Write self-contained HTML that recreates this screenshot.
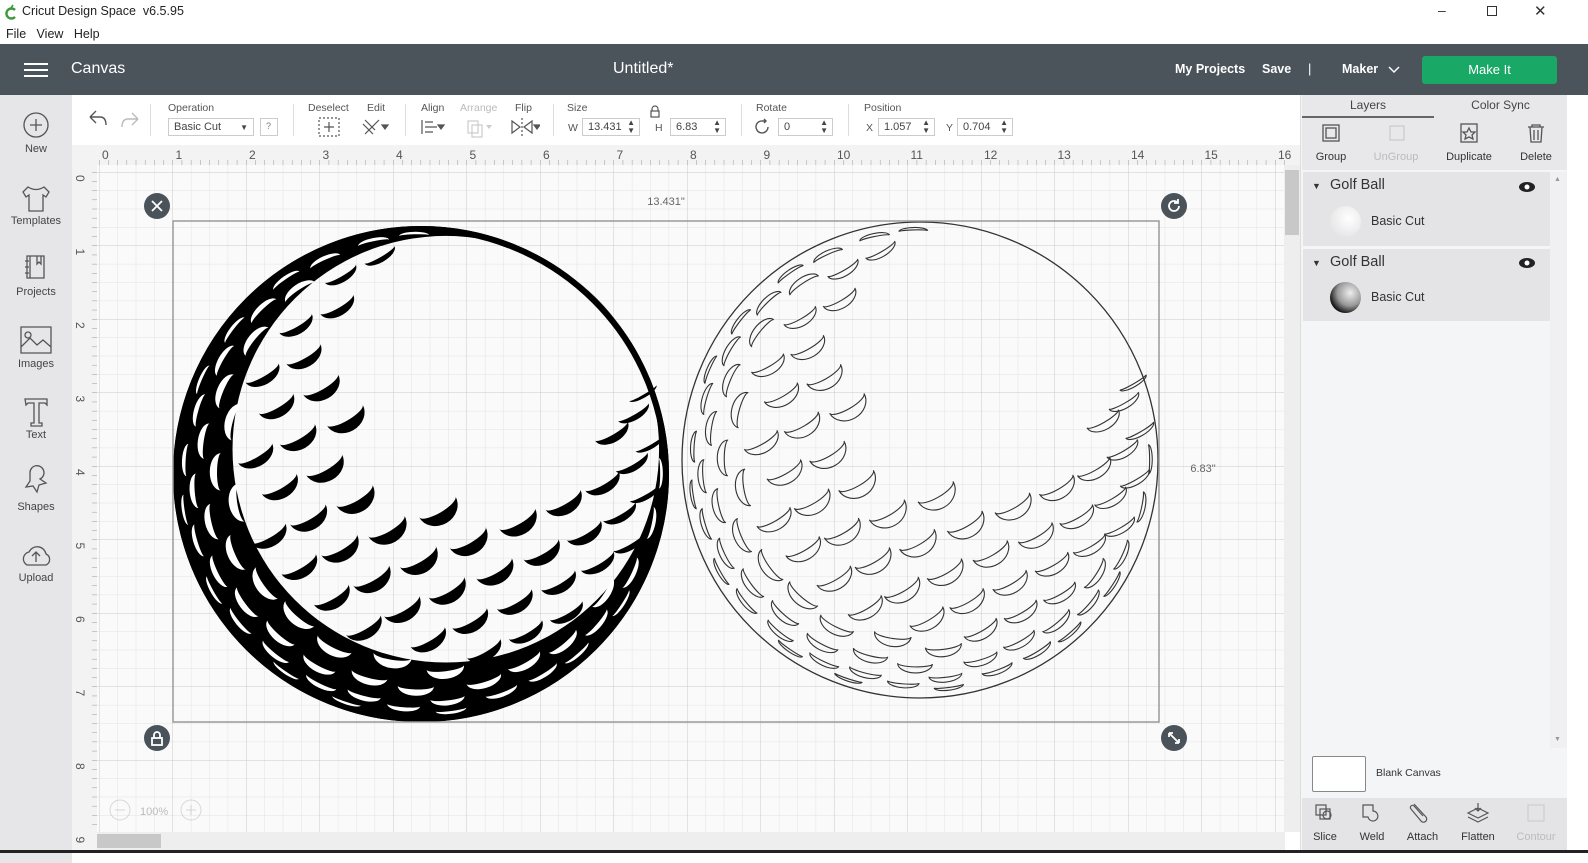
<!DOCTYPE html>
<html><head><meta charset="utf-8">
<style>
*{margin:0;padding:0;box-sizing:border-box}
body{width:1588px;height:863px;overflow:hidden;background:#fff;font-family:"Liberation Sans",sans-serif;position:relative;color:#333}
.a{position:absolute}
.lbl{font-size:10.5px;color:#555;position:absolute}
.inp{position:absolute;border:1px solid #ccc;height:18px;font-size:11px;color:#444;padding:2px 5px;background:#fff}
.sep{position:absolute;top:104px;width:1px;height:32px;background:#ddd}
.side{position:absolute;left:0;width:72px;text-align:center;font-size:11px;color:#444}
.rt{position:absolute;font-size:11px;color:#333;text-align:center}
</style></head><body>
<svg class="a" style="left:4px;top:4px" width="14" height="16" viewBox="0 0 14 16"><path d="M11 6 A5 5 0 1 0 11 13" fill="none" stroke="#3a9a3a" stroke-width="2.4"/><path d="M7 4 L9 1" stroke="#3a9a3a" stroke-width="1.6"/></svg>
<div class="a" style="left:22px;top:4px;font-size:12.5px;color:#222">Cricut Design Space&nbsp; v6.5.95</div>
<div class="a" style="left:1438px;top:2px;font-size:14px">&#8211;</div>
<div class="a" style="left:1487px;top:6px;width:10px;height:10px;border:1.3px solid #333"></div>
<div class="a" style="left:1534px;top:2px;font-size:15px">&#x2715;</div>
<div class="a" style="left:6px;top:27px;font-size:12.5px;color:#222">File&nbsp;&nbsp; View&nbsp;&nbsp; Help</div>
<div class="a" style="left:0;top:44px;width:1588px;height:51px;background:#4b535b"></div>
<div class="a" style="left:24px;top:63px;width:24px;height:2px;background:#fff;box-shadow:0 6px 0 #fff,0 12px 0 #fff"></div>
<div class="a" style="left:71px;top:60px;font-size:16px;color:#fff">Canvas</div>
<div class="a" style="left:613px;top:60px;font-size:16px;color:#fff">Untitled*</div>
<div class="a" style="left:1175px;top:62px;font-size:12.5px;color:#fff;font-weight:bold">My Projects</div>
<div class="a" style="left:1262px;top:62px;font-size:12.5px;color:#fff;font-weight:bold">Save</div>
<div class="a" style="left:1308px;top:61px;font-size:13px;color:#fff">|</div>
<div class="a" style="left:1342px;top:62px;font-size:12.5px;color:#fff;font-weight:bold">Maker</div>
<svg class="a" style="left:1388px;top:66px" width="12" height="8"><path d="M1 1 L6 6 L11 1" fill="none" stroke="#fff" stroke-width="1.5"/></svg>
<div class="a" style="left:1422px;top:56px;width:135px;height:28px;background:#19a866;border-radius:3px;color:#fff;font-size:13px;text-align:center;line-height:28px">Make It</div>
<div class="a" style="left:0;top:95px;width:72px;height:768px;background:#e6e6e8"></div>
<svg class="a" style="left:0;top:95px" width="72" height="500" fill="none" stroke="#555" stroke-width="1.3">
<circle cx="36" cy="30" r="12"/><path d="M36 24v12M30 30h12"/>
<path d="M28 92 L23 97 L26 102 L29 100 L29 116 L43 116 L43 100 L46 102 L49 97 L44 92 Q36 97 28 92Z"/>
<path d="M27 161h17v22h-17zM30 161v22M37 161v8l2-2 2 2v-8M25 166h4M25 172h4M25 178h4"/>
<path d="M21 232h30v26h-30zM21 252l9-9 7 7 6-5 8 7"/><circle cx="28" cy="240" r="3"/>
<path d="M25 304h22v6l-2-2h-6v20h3v3h-11v-3h3v-20h-6l-2 2z"/>
<path d="M30 378 a7 7 0 1 1 10 6 l6 4 -7 2 -2 7 -4-6 -7 1 4-6z"/>
<path d="M27 470 a7 7 0 0 1 2-13 a9 9 0 0 1 17 2 a6 6 0 0 1 0 11 z M36 467v-9 M32 461l4-4 4 4"/>
</svg>
<div class="side" style="top:143px">New</div>
<div class="side" style="top:215px">Templates</div>
<div class="side" style="top:286px">Projects</div>
<div class="side" style="top:358px">Images</div>
<div class="side" style="top:429px">Text</div>
<div class="side" style="top:501px">Shapes</div>
<div class="side" style="top:572px">Upload</div>
<svg class="a" style="left:84px;top:108px" width="60" height="22" fill="none" stroke-width="1.4"><path d="M6 9 L12 3 M6 9 L12 15 M6 9 H16 Q22 9 22 17" stroke="#555"/><path d="M54 11 L48 5 M54 11 L48 17 M54 11 H44 Q38 11 38 19" stroke="#bbb"/></svg>
<div class="sep" style="left:150px"></div>
<div class="lbl" style="left:168px;top:102px">Operation</div>
<div class="inp" style="left:168px;top:118px;width:86px">Basic Cut<span style="position:absolute;right:5px;font-size:8px;top:4px">&#9660;</span></div>
<div class="inp" style="left:260px;top:118px;width:18px;font-size:9px;color:#777">?</div>
<div class="sep" style="left:293px"></div>
<div class="lbl" style="left:308px;top:102px">Deselect</div>
<div class="lbl" style="left:367px;top:102px">Edit</div>
<div class="lbl" style="left:421px;top:102px">Align</div>
<div class="lbl" style="left:460px;top:102px;color:#bbb">Arrange</div>
<div class="lbl" style="left:515px;top:102px">Flip</div>
<svg class="a" style="left:310px;top:115px" width="230" height="24" fill="none" stroke="#555" stroke-width="1.2">
<rect x="9" y="3" width="20" height="18" stroke-dasharray="2 2"/><path d="M19 7v10M14 12h10"/>
<path d="M55 5 l10 10 M53 9 l10 10 M55 19 l14-14" /><path d="M72 10 l3 4 3-4z" fill="#555"/>
<path d="M112 5v14M115 7h8M115 12h12M115 17h8" /><path d="M128 10 l3 4 3-4z" fill="#555"/>
<rect x="158" y="6" width="10" height="12" stroke="#ccc"/><rect x="162" y="10" width="10" height="12" stroke="#ccc"/><path d="M176 10 l3 4 3-4z" fill="#ccc" stroke="none"/>
<path d="M212 3v18" stroke-dasharray="2 2"/><path d="M202 6 l8 6 -8 6z M222 6 l-8 6 8 6z"/><path d="M224 10 l3 4 3-4z" fill="#555"/>
</svg>
<div class="sep" style="left:405px"></div>
<div class="sep" style="left:553px"></div>
<div class="lbl" style="left:567px;top:102px">Size</div>
<div class="lbl" style="left:568px;top:122px">W</div>
<div class="inp" style="left:582px;top:118px;width:58px">13.431<span style="position:absolute;right:4px;font-size:8px;top:0;line-height:8px">&#9650;<br>&#9660;</span></div>
<svg class="a" style="left:649px;top:105px" width="12" height="14" fill="none" stroke="#555" stroke-width="1.2"><path d="M3 6 V4 a3 3 0 0 1 6 0 V6"/><rect x="2" y="6" width="8" height="6"/></svg>
<div class="lbl" style="left:655px;top:122px">H</div>
<div class="inp" style="left:670px;top:118px;width:56px">6.83<span style="position:absolute;right:4px;font-size:8px;top:0;line-height:8px">&#9650;<br>&#9660;</span></div>
<div class="sep" style="left:741px"></div>
<div class="lbl" style="left:756px;top:102px">Rotate</div>
<svg class="a" style="left:754px;top:118px" width="18" height="18" fill="none" stroke="#555" stroke-width="1.4"><path d="M14 9 A6 6 0 1 1 9 3 L12 3 M10 1 L12 3 L10 5"/></svg>
<div class="inp" style="left:778px;top:118px;width:55px">0<span style="position:absolute;right:4px;font-size:8px;top:0;line-height:8px">&#9650;<br>&#9660;</span></div>
<div class="sep" style="left:848px"></div>
<div class="lbl" style="left:864px;top:102px">Position</div>
<div class="lbl" style="left:866px;top:122px">X</div>
<div class="inp" style="left:878px;top:118px;width:57px">1.057<span style="position:absolute;right:4px;font-size:8px;top:0;line-height:8px">&#9650;<br>&#9660;</span></div>
<div class="lbl" style="left:946px;top:122px">Y</div>
<div class="inp" style="left:957px;top:118px;width:56px">0.704<span style="position:absolute;right:4px;font-size:8px;top:0;line-height:8px">&#9650;<br>&#9660;</span></div>
<svg class="a" id="cv" style="left:72px;top:145px" width="1228" height="705">
<defs>
<pattern id="mn" patternUnits="userSpaceOnUse" x="27" y="27" width="18.375" height="18.375"><path d="M0 0H18.375M0 0V18.375" stroke="#e3e3e3" stroke-width="1" fill="none"/></pattern>
<pattern id="mj" patternUnits="userSpaceOnUse" x="27" y="27" width="73.5" height="73.5"><path d="M0 0H73.5M0 0V73.5" stroke="#c9c9c9" stroke-width="1" fill="none"/></pattern>
<pattern id="rt" patternUnits="userSpaceOnUse" x="27" y="0" width="9.1875" height="20"><path d="M0 15V20" stroke="#999"/></pattern>
<pattern id="rl" patternUnits="userSpaceOnUse" x="0" y="27" width="25" height="9.1875"><path d="M20 0H25" stroke="#999"/></pattern>
</defs>
<rect x="25" y="20" width="1188" height="667" fill="#fafafa"/>
<rect x="25" y="20" width="1188" height="667" fill="url(#mn)"/>
<rect x="25" y="20" width="1188" height="667" fill="url(#mj)"/>
<rect x="0" y="0" width="1228" height="20" fill="#f3f3f3"/>
<rect x="0" y="0" width="25" height="705" fill="#f3f3f3"/>
<rect x="25" y="0" width="1188" height="20" fill="url(#rt)"/>
<rect x="0" y="20" width="25" height="667" fill="url(#rl)"/>
<g id="rlab" font-size="12" fill="#555" font-family="Liberation Sans"></g>
<g id="balls"></g>
<rect x="101" y="76" width="986" height="501" fill="none" stroke="#999" stroke-width="1.5"/>
<text x="594" y="60" font-size="11" fill="#666" text-anchor="middle" font-family="Liberation Sans">13.431"</text>
<text x="1131" y="327" font-size="11" fill="#666" text-anchor="middle" font-family="Liberation Sans">6.83"</text>
<g fill="#4a525a"><circle cx="85" cy="61" r="13"/><circle cx="1102" cy="61" r="13"/><circle cx="85" cy="593" r="13"/><circle cx="1102" cy="593" r="13"/></g>
<g stroke="#fff" stroke-width="1.8" fill="none"><path d="M80 56l10 10M90 56l-10 10"/><path d="M1107 61a5 5 0 1 1-2-4M1106 54v4h-4"/><rect x="80" y="593" width="10" height="7"/><path d="M82 593v-3a3 3 0 0 1 6 0v3"/><path d="M1097 588l10 10M1097 588v4M1097 588h4M1107 598v-4M1107 598h-4"/></g>
<g opacity="0.35" stroke="#999" fill="none"><circle cx="48" cy="665" r="10"/><circle cx="119" cy="665" r="10"/><path d="M43 665h10M114 665h10M119 660v10"/></g>
<text x="68" y="670" font-size="11" fill="#bbb" font-family="Liberation Sans">100%</text>
<rect x="1212" y="20" width="16" height="667" fill="#eee"/><rect x="1213" y="25" width="14" height="65" fill="#c8c8c8"/>
<rect x="25" y="687" width="1188" height="18" fill="#eee"/><rect x="25" y="689" width="64" height="14" fill="#c8c8c8"/>
</svg>
<div class="a" style="left:1300px;top:95px;width:288px;height:755px;background:#f4f5f7;border-left:1px solid #ddd"></div>
<div class="a" style="left:1302px;top:95px;width:265px;height:75px;background:#e8e8ea"></div>
<div class="a" style="left:1302px;top:116px;width:132px;height:2px;background:#666"></div>
<div class="rt" style="left:1302px;top:98px;width:132px;font-size:12px;color:#444">Layers</div>
<div class="rt" style="left:1434px;top:98px;width:133px;font-size:12px;color:#444">Color Sync</div>
<svg class="a" style="left:1302px;top:120px" width="265" height="28" fill="none" stroke="#555" stroke-width="1.3">
<rect x="21" y="5" width="16" height="16"/><rect x="24" y="8" width="10" height="10"/>
<rect x="88" y="6" width="14" height="14" stroke="#ccc"/>
<rect x="159" y="4" width="16" height="18"/><path d="M167 8l2 4 4 0-3 3 1 4-4-2-4 2 1-4-3-3 4 0z"/>
<path d="M226 7h16M230 7v-2h8v2M228 7l1 15h10l1-15M232 10v10M236 10v10"/>
</svg>
<div class="rt" style="left:1306px;top:151px;width:50px">Group</div>
<div class="rt" style="left:1371px;top:151px;width:50px;color:#bbb">UnGroup</div>
<div class="rt" style="left:1439px;top:151px;width:60px">Duplicate</div>
<div class="rt" style="left:1511px;top:151px;width:50px">Delete</div>
<div class="a" style="left:1303px;top:172px;width:247px;height:74px;background:#e4e4e6"></div>
<div class="a" style="left:1303px;top:249px;width:247px;height:72px;background:#e4e4e6"></div>
<div class="a" style="left:1312px;top:181px;font-size:9px">&#9660;</div>
<div class="a" style="left:1312px;top:258px;font-size:9px">&#9660;</div>
<div class="a" style="left:1330px;top:177px;font-size:14.5px;color:#333">Golf Ball</div>
<div class="a" style="left:1330px;top:254px;font-size:14.5px;color:#333">Golf Ball</div>
<div class="a" style="left:1371px;top:214px;font-size:12.5px;color:#333">Basic Cut</div>
<div class="a" style="left:1371px;top:290px;font-size:12.5px;color:#333">Basic Cut</div>
<svg class="a" style="left:1518px;top:180px" width="20" height="90"><g><ellipse cx="9" cy="7" rx="8" ry="5" fill="#222"/><circle cx="9" cy="7" r="2.5" fill="#fff"/><ellipse cx="9" cy="83" rx="8" ry="5" fill="#222"/><circle cx="9" cy="83" r="2.5" fill="#fff"/></g></svg>
<div class="a" style="left:1330px;top:206px;width:31px;height:31px;border-radius:50%;background:radial-gradient(circle at 60% 40%,#fff,#ddd)"></div>
<div class="a" style="left:1330px;top:282px;width:31px;height:31px;border-radius:50%;background:radial-gradient(circle at 65% 35%,#eee 0,#999 45%,#111 75%)"></div>
<div class="a" style="left:1550px;top:172px;width:17px;height:576px;background:#f0f0f2"></div>
<div class="a" style="left:1554px;top:176px;font-size:7px;color:#999">&#9650;</div>
<div class="a" style="left:1554px;top:736px;font-size:7px;color:#999">&#9660;</div>
<div class="a" style="left:1312px;top:756px;width:54px;height:36px;background:#fff;border:1px solid #888;border-radius:2px"></div>
<div class="a" style="left:1376px;top:767px;font-size:10.5px;color:#333">Blank Canvas</div>
<div class="a" style="left:1302px;top:798px;width:265px;height:52px;background:#e4e4e6"></div>
<svg class="a" style="left:1302px;top:800px" width="265" height="26" fill="none" stroke="#555" stroke-width="1.2">
<rect x="14" y="5" width="10" height="10"/><rect x="18" y="9" width="10" height="10"/><circle cx="25" cy="15" r="4"/>
<path d="M61 5h10v6a5 5 0 1 1-5 6h-5z"/>
<path d="M112 4l12 13a3 3 0 0 1-5 4l-10-12a2 2 0 0 1 3-3l9 10"/>
<path d="M166 13l10 5 10-5-10-5zM166 17l10 5 10-5M176 3v8M173 8l3 3 3-3"/>
<rect x="226" y="5" width="16" height="16" stroke="#ccc"/>
</svg>
<div class="rt" style="left:1305px;top:831px;width:40px">Slice</div>
<div class="rt" style="left:1352px;top:831px;width:40px">Weld</div>
<div class="rt" style="left:1400px;top:831px;width:45px">Attach</div>
<div class="rt" style="left:1455px;top:831px;width:46px">Flatten</div>
<div class="rt" style="left:1512px;top:831px;width:48px;color:#bbb">Contour</div>
<div class="a" style="left:1567px;top:95px;width:21px;height:755px;background:#fff"></div>
<div class="a" style="left:0;top:850px;width:1588px;height:3px;background:#222"></div>
<script>
(function(){
var NS="http://www.w3.org/2000/svg";
var rl=document.getElementById("rlab");
function t(x,y,s,rot){var e=document.createElementNS(NS,"text");e.setAttribute("x",x);e.setAttribute("y",y);e.textContent=s;if(rot)e.setAttribute("transform","rotate(90 "+x+" "+y+")");rl.appendChild(e);}
for(var i=0;i<=16;i++)t(27+i*73.5+3,14,String(i));
for(var j=0;j<=9;j++)t(4,27+j*73.5+3,String(j),true);
var g=document.getElementById("balls");
var h="";
function ball(cx,cy,R,black){
 var ox=cx+0.1*R,oy=cy-0.1*R,ir=0.86*R;
 if(black){
  h+='<path fill-rule="evenodd" fill="#000" d="M'+(cx-R)+' '+cy+'a'+R+' '+R+' 0 1 0 '+(2*R)+' 0a'+R+' '+R+' 0 1 0 '+(-2*R)+' 0ZM'+(ox-ir)+' '+oy+'a'+ir+' '+ir+' 0 1 1 '+(2*ir)+' 0a'+ir+' '+ir+' 0 1 1 '+(-2*ir)+' 0Z"/>';
  h+='<circle cx="'+cx+'" cy="'+cy+'" r="'+(R-3)+'" fill="none" stroke="#000" stroke-width="6"/>';
 } else {
  h+='<circle cx="'+cx+'" cy="'+cy+'" r="'+R+'" fill="none" stroke="#333" stroke-width="1.3"/>';
 }
 var N=330,ga=Math.PI*(3-Math.sqrt(5));
 var hx=cx+0.25*R,hy=cy-0.45*R;
 for(var k=0;k<N;k++){
  var y=1-2*(k+0.5)/N,r=Math.sqrt(1-y*y),th=ga*k;
  var x=Math.cos(th)*r,z=Math.sin(th)*r;
  if(z<0.12)continue;
  var px=cx+x*R*0.97,py=cy+y*R*0.97;
  var dh=Math.hypot(px-hx,py-hy);
  if(dh<0.56*R)continue;
  if(Math.hypot(px-(cx+0.55*R),py-(cy-0.7*R))<0.5*R)continue;
  var ang=Math.atan2(py-cy,px-cx);
  var inShadow=Math.hypot(px-ox,py-oy)>ir-4;
  var w=0.085*R*(0.55+0.45*Math.sqrt(z)),hh=0.07*R*z+1.5,rot;
  if(inShadow){rot=ang*180/Math.PI-90;} else {rot=-30;}
  var d='M'+(-w)+' 0A'+w+' '+hh+' 0 0 0 '+w+' 0A'+w+' '+(hh*0.35)+' 0 0 1 '+(-w)+' 0Z';
  var fill,stroke="none";
  if(black){fill=inShadow?"#fff":"#000";}else{fill="none";stroke="#333";}
  h+='<path d="'+d+'" transform="translate('+px.toFixed(1)+' '+py.toFixed(1)+') rotate('+rot.toFixed(1)+')" fill="'+fill+'" stroke="'+stroke+'" stroke-width="1.1"/>';
 }
}
ball(349,329,248,true);
ball(848,315,238,false);
g.innerHTML=h;
})();
</script>
</body></html>
